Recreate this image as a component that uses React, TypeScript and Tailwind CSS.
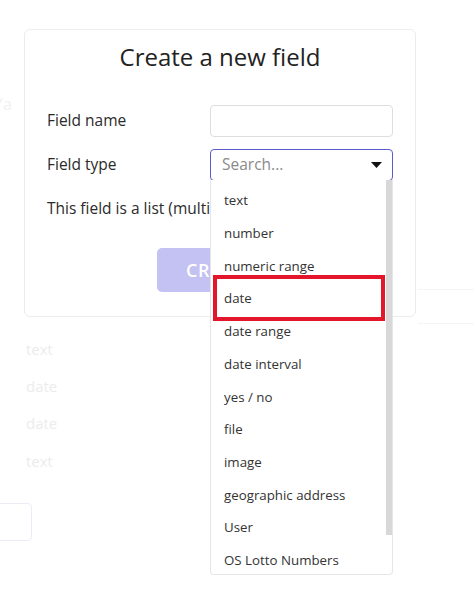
import React from "react";

const options = [
  "text",
  "number",
  "numeric range",
  "date",
  "date range",
  "date interval",
  "yes / no",
  "file",
  "image",
  "geographic address",
  "User",
  "OS Lotto Numbers",
];

const App = () => {
  return (
    <div
      className="relative w-[474px] h-[616px] overflow-hidden bg-white text-[#2b2b2b]"
      style={{ fontFamily: '"Open Sans", "Noto Sans", sans-serif' }}
    >
      {/* faint page behind the popup */}
      <div className="absolute left-[-6px] top-[92px] text-[16px] text-[#f1f1f1]">Ya</div>
      <div className="absolute left-[418px] top-[289px] w-[56px] h-px bg-[#f5f5f5]" />
      <div className="absolute left-[418px] top-[323px] w-[56px] h-px bg-[#f5f5f5]" />

      {/* popup */}
      <div className="ml-[24px] mt-[29px] w-[392px] h-[288px] rounded-[6px] border border-[#ececec] bg-white px-[22px]">
        <h2 className="pt-[11px] text-center text-[24px] leading-[32px] text-[#222]">
          Create a new field
        </h2>
        <div className="mt-[32px] flex flex-col gap-[12px]">
          <div className="flex h-[32px] items-center justify-between">
            <span className="text-[15.5px]">Field name</span>
            <div className="h-[32px] w-[183px] rounded-[4px] border border-[#dedede] bg-white" />
          </div>
          <div className="flex h-[32px] items-center justify-between">
            <span className="text-[15.5px]">Field type</span>
            <div className="flex h-[32px] w-[183px] items-center justify-between rounded-[4px] border-[1.5px] border-[#5b5bd0] bg-white pl-[11px] pr-[10px]">
              <span className="text-[15.5px] text-[#8a8a8a]">Search...</span>
              <svg width="11" height="6" viewBox="0 0 11 6">
                <path d="M0 0 H11 L5.5 6 Z" fill="#111" />
              </svg>
            </div>
          </div>
          <div className="flex h-[32px] items-center">
            <span className="whitespace-nowrap text-[15.5px]">This field is a list (multiple entries)</span>
          </div>
        </div>
        <div className="mt-[23px] flex justify-center">
          <button className="h-[44px] w-[126px] rounded-[5px] bg-[#c3c2f3] text-[18px] font-semibold tracking-wide text-white">
            CREATE
          </button>
        </div>
      </div>

      {/* faint list behind */}
      <div className="ml-[26px] mt-[14px] flex flex-col text-[15px] text-[#ececec]">
        <span className="h-[37px] leading-[37px]">text</span>
        <span className="h-[37px] leading-[37px]">date</span>
        <span className="h-[37px] leading-[37px]">date</span>
        <span className="h-[38px] leading-[38px]">text</span>
      </div>
      <div className="ml-[-8px] mt-[23px] h-[38px] w-[40px] rounded-[4px] border border-[#ececf6]" />

      {/* dropdown */}
      <div className="absolute left-[210px] top-[180px] h-[395px] w-[183px] overflow-hidden rounded-b-[4px] border border-t-0 border-[#e6e6e6] bg-white">
        <div className="absolute right-0 top-0 h-[355px] w-[6px] bg-[#d8d8d8]" />
        <ul className="pt-[5px] pl-[13px]">
          {options.map((o) => (
            <li key={o} className="flex h-[32.7px] items-center text-[13.3px] text-[#333]">
              {o}
            </li>
          ))}
        </ul>
      </div>

      {/* highlight annotation */}
      <div className="absolute left-[213px] top-[275px] h-[46px] w-[172px] border-[4px] border-[#e3162b]" />
    </div>
  );
};

export default App;
